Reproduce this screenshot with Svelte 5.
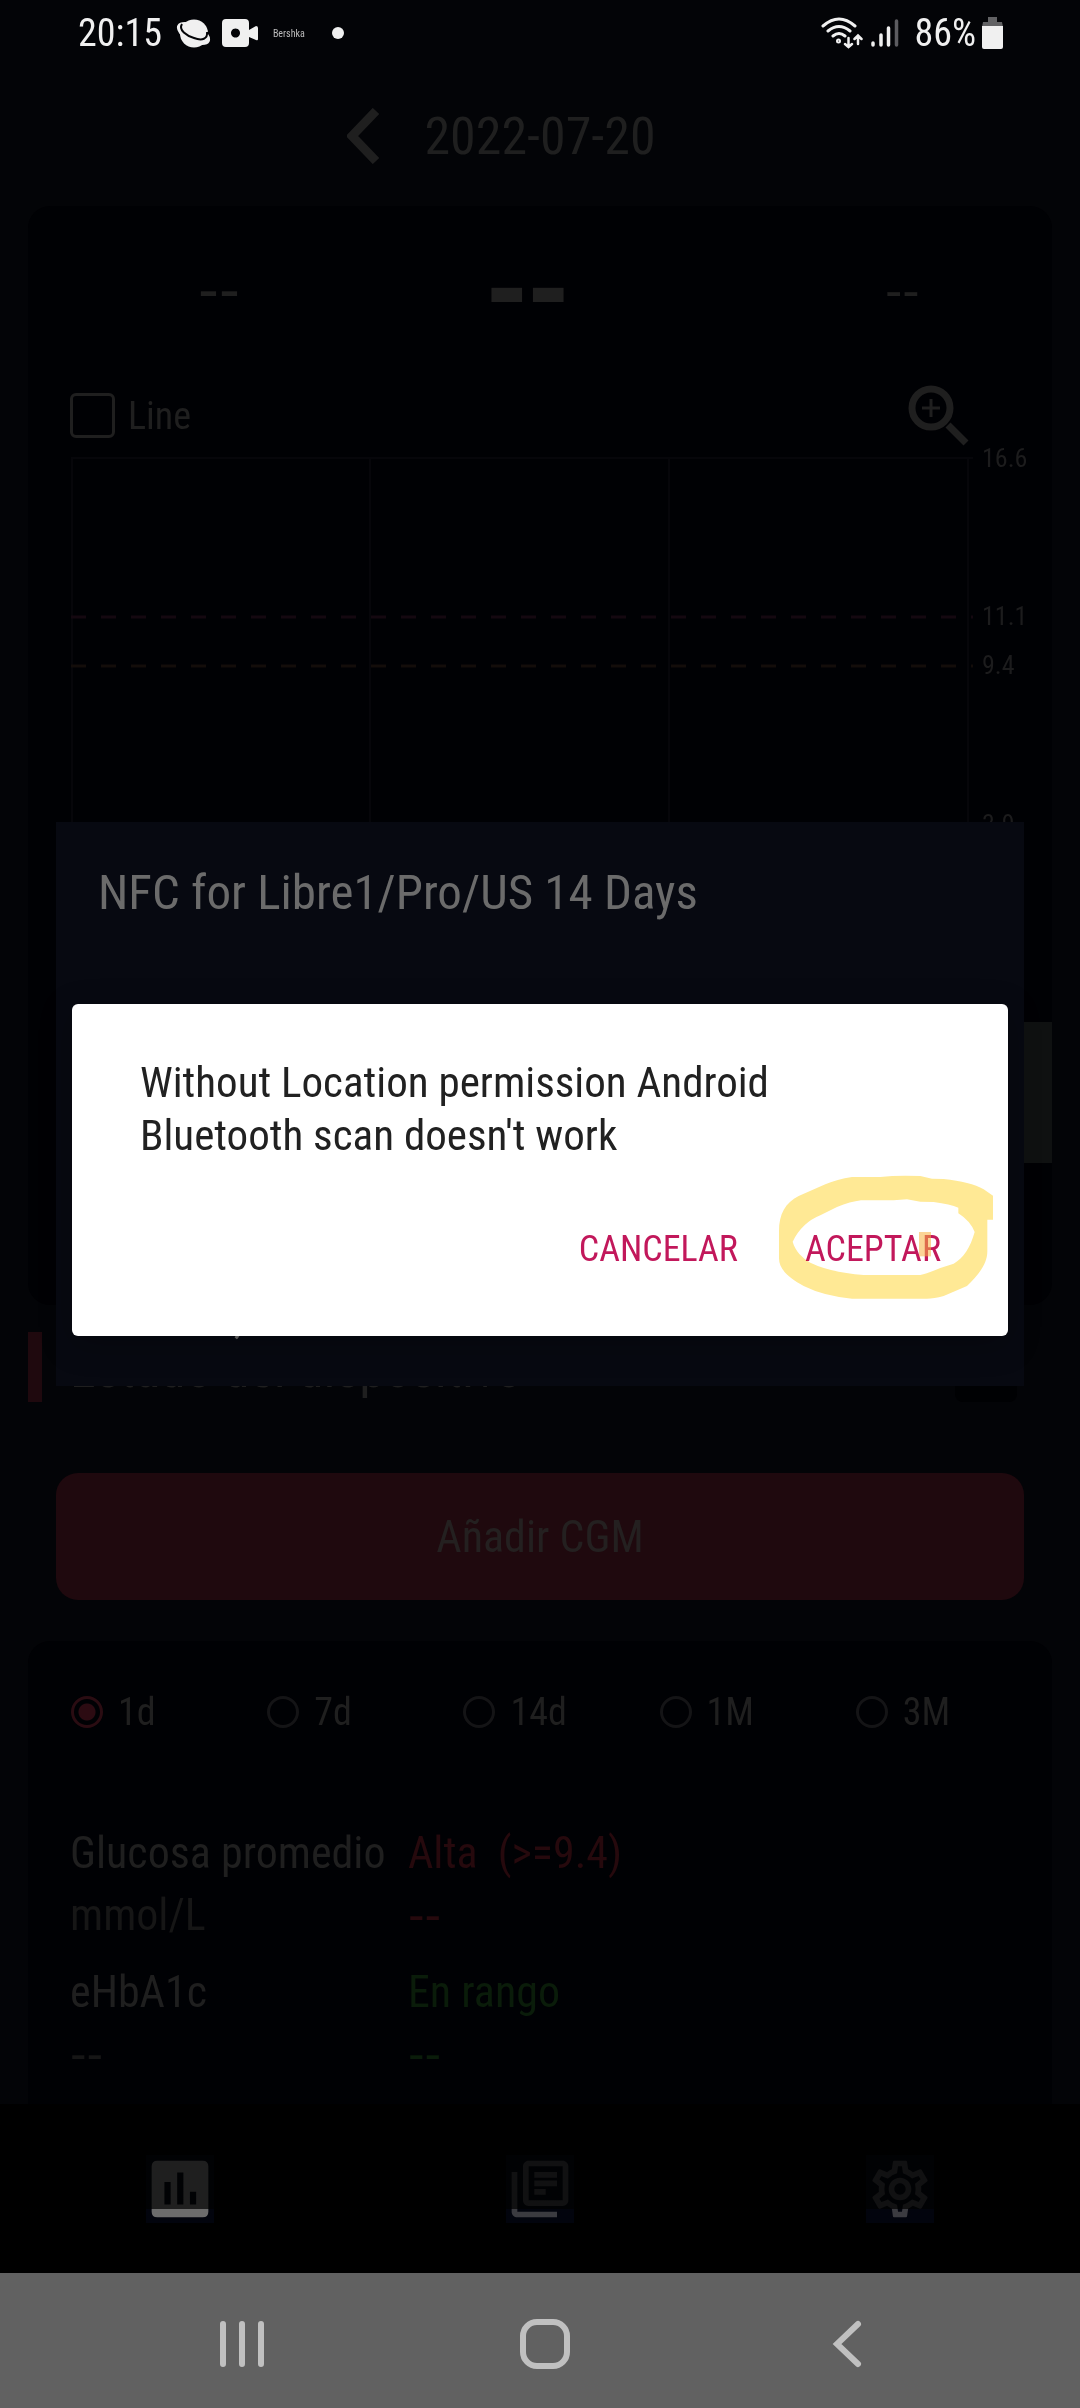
<script>
  const ranges = ['1d', '7d', '14d', '1M', '3M'];
  let range = $state('1d');
  let line = $state(false);

  const stats = [
    { title: 'Glucosa promedio', value: 'mmol/L', label: 'Alta  (>=9.4)', tone: 'high' },
    { title: 'eHbA1c', value: '--', label: 'En rango', tone: 'normal' }
  ];
</script>

<div class="device">
  <header class="status">
    <div class="group left">
      <span class="clock">20:15</span>
      <svg class="planet" viewBox="0 0 35 29" aria-hidden="true">
        <circle cx="18" cy="14.5" r="14" fill="#f0f0f0" />
        <ellipse cx="17.5" cy="14.5" rx="18" ry="9" transform="rotate(27 17.5 14.5)" fill="#f0f0f0" />
        <path d="M6 5C2 11 11 17 18 19C26 22 32 20 31 13" fill="none" stroke="#030407" stroke-width="2" />
      </svg>
      <svg class="camera" viewBox="0 0 36 28" aria-hidden="true">
        <path fill="#f0f0f0" fill-rule="evenodd" d="M4 0H23Q27 0 27 4V11L34 7Q36 7 36 9V20Q36 22 34 21L27 18V24Q27 28 23 28H4Q0 28 0 24V4Q0 0 4 0ZM13.5 9.5a4.5 4.5 0 1 0 .01 0Z" />
      </svg>
      <span class="brand">Bershka</span>
      <span class="dot"></span>
    </div>
    <div class="group right">
      <svg class="wifi" viewBox="0 0 42 32" aria-hidden="true" fill="none" stroke="#f0f0f0" stroke-width="3" stroke-linecap="round">
        <path d="M2 9Q18 -5 34 9M7 14Q18 5 29 14M12 19Q18 14 24 19" />
        <circle cx="17.5" cy="24" r="1" />
        <path stroke-width="2.5" d="M27.5 21V30M24 27L27.5 30L31 27M37 27V19M33.5 22L37 18.5L40.5 22" />
      </svg>
      <svg class="signal" viewBox="0 0 28 30" aria-hidden="true" stroke-width="3.5" stroke-linecap="round" stroke="#f0f0f0">
        <path d="M2 25V27M10 17V27M17.5 10V27" />
        <path d="M25.5 3V27" stroke="#5c5c60" />
      </svg>
      <span class="clock percent">86%</span>
      <svg class="battery" viewBox="0 0 21 32" aria-hidden="true">
        <path fill="#626264" d="M6 0H15V5H20L21 10H0L1 5H6Z" />
        <path fill="#f0f0f0" d="M0 9H21V30Q21 32 19 32H2Q0 32 0 30Z" />
      </svg>
    </div>
  </header>

  <main class="screen">
    <div class="date">
      <button class="plain" aria-label="Día anterior">
        <svg class="prev" viewBox="0 0 34 56" aria-hidden="true"><path d="M29 3L5 28L29 53" fill="none" stroke="#1f1f1f" stroke-width="9" stroke-linejoin="miter" /></svg>
      </button>
      <span>2022-07-20</span>
      <span class="balance"></span>
    </div>

    <section class="card">
      <div class="readings">
        <span class="mark small">--</span>
        <strong class="mark big">--</strong>
        <span class="mark tiny">--</span>
      </div>
      <div class="tools">
        <label class="check"><input type="checkbox" bind:checked={line} />Line</label>
        <button class="plain" aria-label="Ampliar">
          <svg class="magnify" viewBox="0 0 61 61" aria-hidden="true" fill="none" stroke="#1f1f1f">
            <circle cx="23" cy="23" r="19" stroke-width="7" />
            <path d="M23 14V32M14 23H32" stroke-width="3" />
            <path d="M40 40L58 58" stroke-width="7" />
          </svg>
        </button>
      </div>
      <svg class="chart" viewBox="0 0 981 576" role="img" aria-label="Gráfico de glucosa">
        <g fill="none" stroke="#06060a" stroke-width="2">
          <path d="M0 12H902M1 12V576M299 12V576M598 12V576M897 12V576" />
        </g>
        <path d="M0 171H902" stroke="#140810" stroke-width="3" stroke-dasharray="15 15" />
        <path d="M0 220H902" stroke="#130d0a" stroke-width="3" stroke-dasharray="15 15" />
        <g fill="#1c1c1d">
          <text x="911" y="21">16.6</text>
          <text x="911" y="179">11.1</text>
          <text x="911" y="228">9.4</text>
          <text x="911" y="387">3.9</text>
        </g>
      </svg>
      <div class="tab"></div>
    </section>

    <div class="heading">
      <h2>Estado del dispositivo</h2>
      <span class="chip"></span>
    </div>

    <button class="add">Añadir CGM</button>

    <section class="card summary">
      <div class="ranges">
        {#each ranges as r}
          <label><input type="radio" name="range" value={r} bind:group={range} />{r}</label>
        {/each}
      </div>
      <div class="stats">
        {#each stats as s}
          <div class="stat">
            <span>{s.title}</span>
            <span class={s.tone}>{s.label}</span>
            <span class="value" class:dashes={s.value === '--'}>{s.value}</span>
            <span class="dashes {s.tone}">--</span>
          </div>
        {/each}
      </div>
    </section>
  </main>

  <nav class="tabs">
    <button class="plain" aria-label="Resumen">
      <svg viewBox="0 0 24 24" aria-hidden="true">
        <defs>
          <linearGradient id="active" gradientUnits="userSpaceOnUse" x1="0" y1="0" x2="0" y2="24">
            <stop offset="0.794" stop-color="#1f1f1f" /><stop offset="0.794" stop-color="#6c6c6c" />
          </linearGradient>
          <linearGradient id="idle" gradientUnits="userSpaceOnUse" x1="0" y1="0" x2="0" y2="24">
            <stop offset="0.794" stop-color="#111112" /><stop offset="0.794" stop-color="#3b3b40" />
          </linearGradient>
          <linearGradient id="plate" gradientUnits="userSpaceOnUse" x1="0" y1="0" x2="0" y2="24">
            <stop offset="0.794" stop-color="#010204" /><stop offset="0.794" stop-color="#02040d" />
          </linearGradient>
        </defs>
        <rect width="24" height="24" fill="url(#plate)" />
        <path fill="url(#active)" fill-rule="evenodd" d="M4 2H20Q22 2 22 4V20Q22 22 20 22H4Q2 22 2 20V4Q2 2 4 2ZM6.5 9.5V17.5H8.7V9.5ZM11 6.2V17.5H13.2V6.2ZM15.5 13V17.5H17.7V13Z" />
      </svg>
    </button>
    <button class="plain" aria-label="Registros">
      <svg viewBox="0 0 24 24" aria-hidden="true">
        <rect width="24" height="24" fill="url(#plate)" />
        <path fill="url(#idle)" d="M4 6H2v14c0 1.1.9 2 2 2h14v-2H4V6zm16-4H8c-1.1 0-2 .9-2 2v12c0 1.1.9 2 2 2h12c1.1 0 2-.9 2-2V4c0-1.1-.9-2-2-2zm0 14H8V4h12v12zM10 9h8v2h-8zm0 3h4v2h-4zm0-6h8v2h-8z" />
      </svg>
    </button>
    <button class="plain" aria-label="Ajustes">
      <svg viewBox="0 0 24 24" aria-hidden="true">
        <rect width="24" height="24" fill="url(#plate)" />
        <path fill="url(#idle)" d="M19.43 12.98c.04-.32.07-.64.07-.98s-.03-.66-.07-.98l2.11-1.65c.19-.15.24-.42.12-.64l-2-3.46c-.09-.16-.26-.25-.44-.25-.06 0-.12.01-.17.03l-2.49 1c-.52-.4-1.08-.73-1.69-.98l-.38-2.65C14.46 2.18 14.25 2 14 2h-4c-.25 0-.46.18-.49.42l-.38 2.65c-.61.25-1.17.59-1.69.98l-2.49-1c-.06-.02-.12-.03-.18-.03-.17 0-.34.09-.43.25l-2 3.46c-.13.22-.07.49.12.64l2.11 1.65c-.04.32-.07.65-.07.98s.03.66.07.98l-2.11 1.65c-.19.15-.24.42-.12.64l2 3.46c.09.16.26.25.44.25.06 0 .12-.01.17-.03l2.49-1c.52.4 1.08.73 1.69.98l.38 2.65c.03.24.24.42.49.42h4c.25 0 .46-.18.49-.42l.38-2.65c.61-.25 1.17-.59 1.69-.98l2.49 1c.06.02.12.03.18.03.17 0 .34-.09.43-.25l2-3.46c.12-.22.07-.49-.12-.64l-2.11-1.65zm-1.98-1.71c.04.31.05.52.05.73 0 .21-.02.43-.05.73l-.14 1.13.89.7 1.08.84-.7 1.21-1.27-.51-1.04-.42-.9.68c-.43.32-.84.56-1.25.73l-1.06.43-.16 1.13-.2 1.35h-1.4l-.19-1.35-.16-1.13-1.06-.43c-.43-.18-.83-.41-1.23-.71l-.91-.7-1.06.43-1.27.51-.7-1.21 1.08-.84.89-.7-.14-1.13c-.03-.31-.05-.54-.05-.74s.02-.43.05-.73l.14-1.13-.89-.7-1.08-.84.7-1.21 1.27.51 1.04.42.9-.68c.43-.32.84-.56 1.25-.73l1.06-.43.16-1.13.2-1.35h1.39l.19 1.35.16 1.13 1.06.43c.43.18.83.41 1.23.71l.91.7 1.06-.43 1.27-.51.7 1.21-1.07.85-.89.7.14 1.13zM12 8c-2.21 0-4 1.79-4 4s1.79 4 4 4 4-1.79 4-4-1.79-4-4-4zm0 6c-1.1 0-2-.9-2-2s.9-2 2-2 2 .9 2 2-.9 2-2 2z" />
      </svg>
    </button>
  </nav>

  <nav class="system">
    <button class="plain" aria-label="Recientes">
      <svg viewBox="0 0 52 52" aria-hidden="true"><path d="M7 6V46M26 6V46M45 6V46" stroke="#c0c0c0" stroke-width="6" stroke-linecap="round" /></svg>
    </button>
    <button class="plain" aria-label="Inicio">
      <svg viewBox="0 0 52 52" aria-hidden="true"><rect x="4" y="4" width="44" height="44" rx="14" fill="none" stroke="#c0c0c0" stroke-width="6" /></svg>
    </button>
    <button class="plain" aria-label="Atrás">
      <svg viewBox="0 0 52 52" aria-hidden="true"><path d="M37 6L16 26L37 46" fill="none" stroke="#c0c0c0" stroke-width="6" stroke-linecap="round" /></svg>
    </button>
  </nav>

  <div class="layer back">
    <section class="sheet">
      <h1>NFC for Libre1/Pro/US 14 Days</h1>
      <p>,</p>
    </section>
  </div>

  <div class="layer front">
    <div class="dialog" role="alertdialog" aria-modal="true" aria-labelledby="message">
      <p id="message">Without Location permission Android<br />Bluetooth scan doesn't work</p>
      <div class="actions">
        <button class="plain">CANCELAR</button>
        <button class="plain">ACEPTAR
          <svg class="marker" viewBox="0 0 780 540" aria-hidden="true">
            <path fill="#ffe995" fill-rule="evenodd" d="M66 240C66 190 85 155 125 135L205 100Q240 85 285 78H370Q420 72 490 75L525 83L560 84Q640 92 680 115L708 134V206H691V300C691 340 665 370 630 405L560 435Q530 443 510 443H285Q200 435 140 405C95 380 66 355 66 322ZM107 272C115 300 135 320 160 335Q220 364 320 372H490Q510 368 550 351L590 338C620 320 640 290 653 243Q640 210 604 187V170Q580 160 530 153L490 152L450 145L410 148H312Q280 152 240 168L190 193Q135 215 107 272Z" />
          </svg>
          <svg class="smudge" viewBox="0 0 780 540" aria-hidden="true">
            <rect x="486" y="243" width="36" height="73" fill="#f8b040" opacity="0.55" />
          </svg>
        </button>
      </div>
    </div>
  </div>
</div>

<style>
  :global(body) { margin: 0; background: #030407; }
  * { box-sizing: border-box; }
  .device {
    position: relative;
    display: flex;
    flex-direction: column;
    min-height: 100vh;
    overflow: hidden;
    background: #030407;
    color: #1f1f1f;
    font-family: "Roboto Condensed", Roboto, sans-serif;
    font-size: 44px;
  }
  h1, h2, p { margin: 0; font-weight: 400; }
  svg { display: block; }
  button { font: inherit; color: inherit; cursor: pointer; }
  .plain { padding: 0; border: 0; background: none; }

  .status { display: flex; justify-content: space-between; height: 66px; padding: 0 77px 0 78px; color: #f0f0f0; }
  .group { display: flex; align-items: center; }
  .clock { font-size: 38px; line-height: 66px; }
  .planet { width: 35px; margin-left: 14px; }
  .camera { width: 36px; margin-left: 11px; }
  .brand { margin-left: 15px; font-size: 10px; color: #bbb; }
  .dot { width: 12px; height: 12px; margin-left: 27px; border-radius: 50%; background: #f0f0f0; }
  .wifi { width: 42px; }
  .signal { width: 28px; margin-left: 8px; }
  .percent { margin-left: 15px; }
  .battery { width: 21px; margin-left: 6px; }

  .screen { flex: 1; display: flex; flex-direction: column; }
  .date { display: flex; justify-content: center; align-items: center; gap: 43px; height: 140px; font-size: 52px; }
  .prev { width: 34px; }
  .balance { width: 34px; }

  .card { margin: 0 28px; padding: 54px 0 142px; border-radius: 22px; background: #000104; }
  .readings { display: grid; grid-template-columns: 288fr 399fr 167fr; align-items: center; height: 60px; padding-left: 170px; }
  .mark { font-family: "DejaVu Sans", sans-serif; line-height: 60px; }
  .small { font-size: 58px; }
  .big { font-size: 100px; }
  .tiny { font-size: 48px; }
  .tools { display: flex; justify-content: space-between; align-items: center; margin: 65px 83px 0 42px; }
  .check { display: flex; align-items: center; gap: 13px; font-size: 38px; }
  .check input { appearance: none; width: 45px; height: 45px; margin: 0; border: 3px solid #1f1f1f; border-radius: 6px; }
  .magnify { width: 61px; }
  .chart { width: calc(100% - 43px); margin-left: 43px; overflow: visible; font-size: 26px; }
  .tab { width: 60px; height: 141px; margin-left: auto; background: #0f1111; }

  .heading { display: flex; justify-content: space-between; align-items: flex-end; margin: 27px 63px 0 28px; padding-left: 28px; height: 70px; border-left: 14px solid #1f090e; }
  .heading h2 { font-size: 52px; line-height: 64px; }
  .chip { width: 62px; height: 62px; border-radius: 8px; background: #000103; }
  .add { height: 127px; margin: 71px 56px 41px; border: 0; border-radius: 22px; background: #1f090e; color: #242020; }

  .summary { flex: 1; padding: 51px 0 19px; border-radius: 22px 22px 0 0; }
  .ranges { display: grid; grid-template-columns: repeat(5, 1fr); padding-left: 43px; font-size: 38px; line-height: 40px; }
  .ranges label { display: flex; align-items: center; gap: 15px; }
  .ranges input { appearance: none; width: 32px; height: 32px; margin: 0; border: 3px solid #141416; border-radius: 50%; }
  .ranges input:checked { border-color: #2a0c12; background: radial-gradient(circle, #2c0b12 8px, transparent 9px); }
  .stats { display: grid; gap: 15px; margin: 90px 0 0 42px; line-height: 62px; }
  .stat { display: grid; grid-template-columns: 338px 1fr; grid-auto-rows: 62px; white-space: pre; }
  .value { color: #161616; }
  .high { color: #26090d; }
  .normal { color: #0a1c0a; }
  .dashes { font-family: "DejaVu Sans", sans-serif; font-size: 46px; }

  .tabs { display: grid; grid-template-columns: repeat(3, 1fr); place-items: center; height: 169px; background: #000; }
  .tabs svg { width: 68px; }
  .system { display: flex; justify-content: space-between; align-items: center; height: 135px; padding: 6px 207px 0 216px; background: #616161; }
  .system svg { width: 52px; }

  .layer { position: absolute; inset: 0; display: flex; flex-direction: column; justify-content: center; pointer-events: none; }
  .layer > * { pointer-events: auto; }
  .back { bottom: 200px; padding: 0 56px; }
  .front { top: 66px; bottom: 135px; padding: 0 72px; }
  .sheet { display: flex; flex-direction: column; justify-content: space-between; height: 564px; padding: 41px 42px 38px; background: #070911; color: #6b6b6b; }
  .sheet h1 { font-size: 49px; line-height: 60px; }
  .sheet p { padding-left: 136px; line-height: 60px; }
  .dialog { padding: 52px 51px 39px 68px; border-radius: 6px; background: #fff; box-shadow: 0 8px 32px rgba(0, 0, 0, 0.25); color: #212121; }
  .dialog p { font-size: 43px; line-height: 53px; }
  .actions { display: flex; justify-content: flex-end; gap: 35px; margin-top: 39px; }
  .actions button { position: relative; height: 96px; padding: 0 16px; font-size: 36px; color: #c2185b; }
  .marker, .smudge { position: absolute; top: -50px; left: -32px; width: 260px; pointer-events: none; }
  .marker { mix-blend-mode: multiply; }
</style>
